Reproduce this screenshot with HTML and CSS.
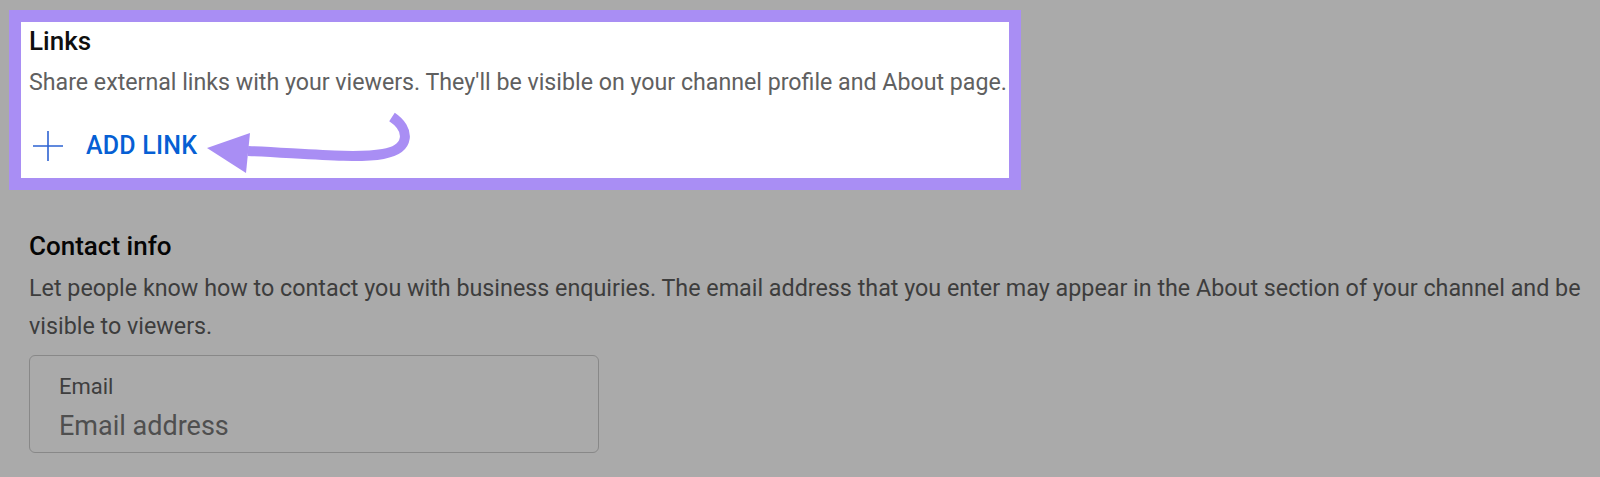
FILE: index.html
```html
<html lang="en">
    <head>
        <meta charset="UTF-8">
        <meta name="viewport" content="width=device-width, initial-scale=1.0">
        <title>Channel details</title>
        <link rel="stylesheet" href="styles.css">
    </head>
    <body>
        <div class="page">
            <section class="links-box">
                <h2>Links</h2>
                <p class="desc">Share external links with your viewers. They'll be visible on your channel profile and About page.</p>
                <button type="button" class="add-link">
                    <svg class="plus" width="30" height="30" viewBox="0 0 30 30">
                        <path d="M15 0 V30 M0 15 H30" stroke="#2d63d2" stroke-width="1.6" fill="none"/>
                    </svg>
                    <span>ADD LINK</span>
                </button>
                <svg class="arrow" width="220" height="70" viewBox="200 105 220 70">
                    <path d="M249 149 C300 151, 355 157, 384 152 C412 147, 411 127, 393 115" stroke="#a98ef4" stroke-width="10" fill="none"/>
                    <polygon points="208,146 251,131 247,171" fill="#a98ef4"/>
                </svg>
            </section>

            <section class="contact">
                <h2>Contact info</h2>
                <p class="desc">Let people know how to contact you with business enquiries. The email address that you enter may appear in the About section of your channel and be visible to viewers.</p>
                <div class="field">
                    <label for="email">Email</label>
                    <input type="text" id="email" placeholder="Email address">
                </div>
            </section>
        </div>
    </body>
</html>
```

FILE: styles.css
```css
* {
    margin: 0;
    padding: 0;
    box-sizing: border-box;
}

body {
    background-color: #aaaaaa;
    font-family: Roboto, "Liberation Sans", sans-serif;
    overflow: hidden;
}

.page {
    padding: 10px 0 0 9px;
}

h2 {
    font-size: 26px;
    line-height: 34px;
    font-weight: 500;
    color: #0f0f0f;
}

.links-box {
    position: relative;
    width: 1012px;
    height: 180px;
    border: 12px solid #a98ef4;
    background-color: white;
    padding: 2px 0 0 8px;

    .desc {
        margin-top: 8px;
        font-size: 23.2px;
        line-height: 32px;
        white-space: nowrap;
        color: #606060;
    }
}

.add-link {
    display: flex;
    align-items: center;
    gap: 23px;
    margin-top: 33px;
    padding-left: 4px;
    background: none;
    border: none;
    font-family: inherit;
    font-size: 25px;
    line-height: 30px;
    font-weight: 500;
    letter-spacing: 0.2px;
    color: #065fd4;
    cursor: pointer;

    .plus {
        display: block;
    }
}

.arrow {
    position: absolute;
    left: 178px;
    top: 85px;
}

.contact {
    margin-top: 39px;
    padding-left: 20px;

    h2 {
        color: #050505;
    }

    .desc {
        margin-top: 6px;
        font-size: 23.3px;
        line-height: 38px;
        color: #3d3d3d;
        padding-right: 10px;
    }
}

.field {
    margin-top: 10px;
    width: 570px;
    height: 98px;
    border: 1px solid #888888;
    border-radius: 6px;
    padding: 19px 29px 0;
    display: flex;
    flex-direction: column;

    label {
        font-size: 22px;
        line-height: 24px;
        color: #3e3e3e;
    }

    input {
        margin-top: 12px;
        background: none;
        border: none;
        outline: none;
        font-family: inherit;
        font-size: 27px;
        line-height: 30px;
        color: #4d4d4d;
    }

    input::placeholder {
        color: #4f4f4f;
    }
}
```
